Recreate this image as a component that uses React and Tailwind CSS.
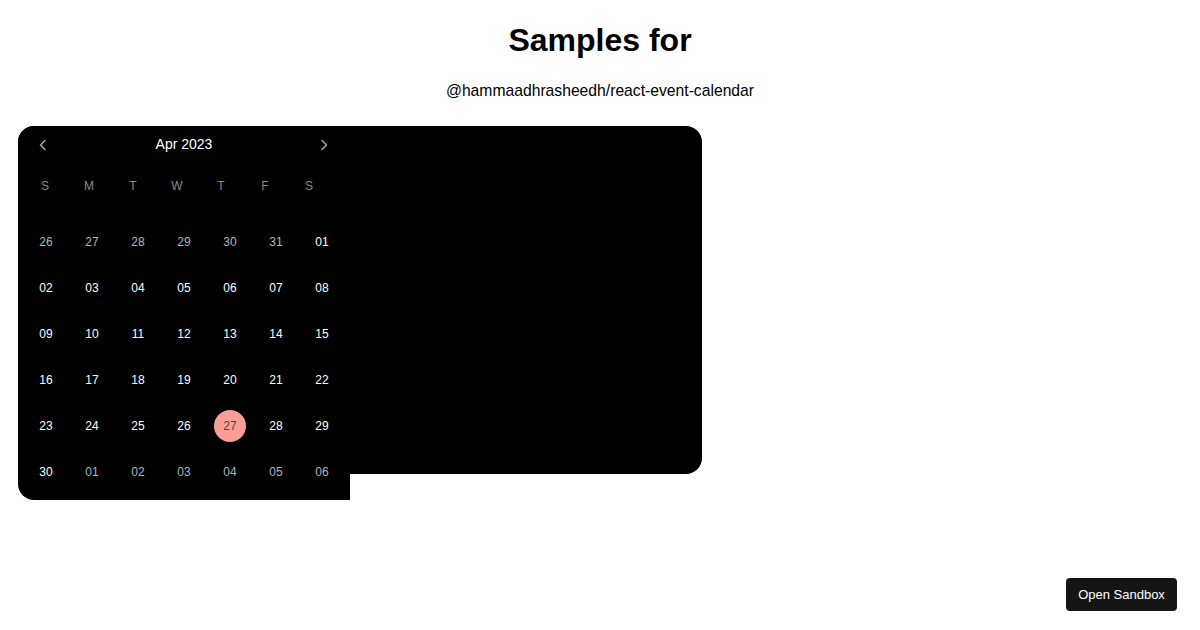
import React from "react";

const WEEKDAYS = ["S", "M", "T", "W", "T", "F", "S"];

const WEEKS = [
  [["26", 0], ["27", 0], ["28", 0], ["29", 0], ["30", 0], ["31", 0], ["01", 1]],
  [["02", 1], ["03", 1], ["04", 1], ["05", 1], ["06", 1], ["07", 1], ["08", 1]],
  [["09", 1], ["10", 1], ["11", 1], ["12", 1], ["13", 1], ["14", 1], ["15", 1]],
  [["16", 1], ["17", 1], ["18", 1], ["19", 1], ["20", 1], ["21", 1], ["22", 1]],
  [["23", 1], ["24", 1], ["25", 1], ["26", 1], ["27", 2], ["28", 1], ["29", 1]],
  [["30", 1], ["01", 0], ["02", 0], ["03", 0], ["04", 0], ["05", 0], ["06", 0]],
];

function Chevron({ dir = "left" }) {
  return (
    <svg width="10" height="12" viewBox="0 0 10 12" fill="none">
      <path
        d={dir === "left" ? "M7 1.5 L2.5 6 L7 10.5" : "M3 1.5 L7.5 6 L3 10.5"}
        stroke="#a3a3a3"
        strokeWidth="1.6"
        strokeLinecap="round"
        strokeLinejoin="round"
      />
    </svg>
  );
}

function Calendar() {
  return (
    <div className="w-[332px] shrink-0 rounded-l-2xl bg-black px-[5px] pb-[5px]">
      <div className="flex h-[37px] items-center justify-between">
        <button type="button" className="flex h-6 w-[40px] items-center justify-center">
          <Chevron dir="left" />
        </button>
        <span className="ml-[2px] text-[14px] text-white">Apr 2023</span>
        <button type="button" className="flex h-6 w-[42px] items-center justify-center">
          <Chevron dir="right" />
        </button>
      </div>
      <div className="grid h-[46px] w-[308px] grid-cols-7 items-center">
        {WEEKDAYS.map((d, i) => (
          <span key={i} className="text-center text-[12px] text-[#8a8a8a]">
            {d}
          </span>
        ))}
      </div>
      <div className="mt-[10px]">
        {WEEKS.map((week, w) => (
          <div key={w} className="grid h-[46px] grid-cols-7 items-center">
            {week.map(([n, kind], i) => (
              <div key={i} className="flex items-center justify-center">
                {kind === 2 ? (
                  <span className="flex h-8 w-8 items-center justify-center rounded-full bg-[#fa9f97] text-[12px] text-[#4a4a4a]">
                    {n}
                  </span>
                ) : (
                  <span
                    className={`text-[12px] ${kind === 1 ? "text-white" : "text-[#b3b3b8]"}`}
                  >
                    {n}
                  </span>
                )}
              </div>
            ))}
          </div>
        ))}
      </div>
    </div>
  );
}

export default function App() {
  return (
    <div className="relative min-h-[630px] bg-white font-['Liberation_Sans',Arial,sans-serif] text-black">
      <h1 className="pt-[22px] text-center text-[32px] font-bold leading-[37px]">Samples for</h1>
      <p className="mt-[23px] text-center text-[15.7px] leading-[18px]">
        @hammaadhrasheedh/react-event-calendar
      </p>
      <div className="mt-[26px] px-[18px]">
        <div className="flex h-[348px] w-[684px] items-start rounded-2xl bg-black">
          <Calendar />
        </div>
      </div>
      <button
        type="button"
        className="absolute bottom-[19px] right-[23px] flex h-[33px] w-[111px] items-center justify-center rounded-[4px] bg-[#151515] text-[13px] text-white"
      >
        Open Sandbox
      </button>
    </div>
  );
}
